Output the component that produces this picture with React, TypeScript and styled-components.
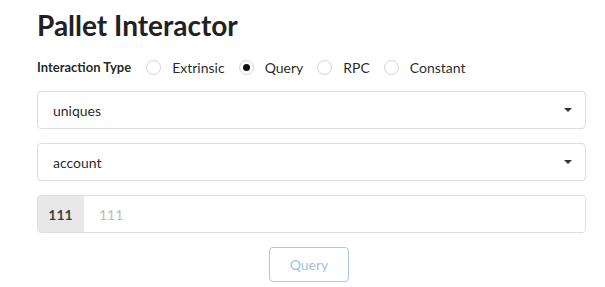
import React from "react";
import styled, { createGlobalStyle } from "styled-components";

const Global = createGlobalStyle`
  html, body { margin: 0; padding: 0; background: #fff; }
  body { font-family: Lato, "Helvetica Neue", Arial, sans-serif; font-size: 14px; color: rgba(0,0,0,.87); }
  * { box-sizing: border-box; }
`;

const Page = styled.div`
  padding: 7px 19px 0 37px;
  width: 605px;
`;

const Title = styled.h1`
  margin: 0;
  font-size: 28px;
  font-weight: 700;
  line-height: 36px;
  color: #212121;
`;

const TypeRow = styled.div`
  display: flex;
  align-items: center;
  height: 20px;
  margin-top: 14px;
`;

const FieldLabel = styled.span`
  font-size: 13px;
  font-weight: 700;
  margin-right: 15px;
`;

const RadioItem = styled.label`
  display: flex;
  align-items: center;
  font-size: 14px;
  margin-right: 14px;
`;

const RadioCircle = styled.span<{ $checked?: boolean }>`
  width: 15px;
  height: 15px;
  border-radius: 50%;
  border: 1px solid #d4d4d5;
  margin-right: 11px;
  display: flex;
  align-items: center;
  justify-content: center;
  &::after {
    content: "";
    display: ${(p) => (p.$checked ? "block" : "none")};
    width: 7px;
    height: 7px;
    border-radius: 50%;
    background: #111;
  }
`;

const Fields = styled.div`
  display: flex;
  flex-direction: column;
  gap: 14px;
  margin-top: 14px;
`;

const Dropdown = styled.div`
  height: 38px;
  border: 1px solid rgba(34,36,38,.15);
  border-radius: 4px;
  display: flex;
  align-items: center;
  justify-content: space-between;
  padding: 0 13px 0 15px;
  font-size: 14px;
`;

const Caret = styled.span`
  width: 0;
  height: 0;
  border-left: 4px solid transparent;
  border-right: 4px solid transparent;
  border-top: 4px solid #333;
`;

const InputGroup = styled.div`
  display: flex;
  height: 38px;
  border: 1px solid rgba(34,36,38,.15);
  border-radius: 4px;
  overflow: hidden;
`;

const InputLabel = styled.div`
  width: 47px;
  background: #e8e8e8;
  color: rgba(0,0,0,.75);
  font-weight: 700;
  font-size: 14px;
  display: flex;
  align-items: center;
  justify-content: center;
  margin: -1px 0 -1px -1px;
`;

const TextInput = styled.input`
  flex: 1;
  border: none;
  outline: none;
  padding: 0 15px;
  font-family: inherit;
  font-size: 14px;
  &::placeholder { color: #bdbdbd; }
`;

const ButtonRow = styled.div`
  display: flex;
  justify-content: center;
  margin-top: 14px;
  padding-right: 5px;
`;

const Button = styled.button`
  width: 80px;
  height: 35px;
  border: 1px solid #a9c6ee;
  border-radius: 4px;
  background: #fff;
  color: #a3bfe8;
  font-family: inherit;
  font-size: 14px;
`;

export default function App() {
  const types = ["Extrinsic", "Query", "RPC", "Constant"];
  return (
    <>
      <Global />
      <Page>
        <Title>Pallet Interactor</Title>
        <TypeRow>
          <FieldLabel>Interaction Type</FieldLabel>
          {types.map((t) => (
            <RadioItem key={t}>
              <RadioCircle $checked={t === "Query"} />
              {t}
            </RadioItem>
          ))}
        </TypeRow>
        <Fields>
          <Dropdown>
            uniques
            <Caret />
          </Dropdown>
          <Dropdown>
            account
            <Caret />
          </Dropdown>
          <InputGroup>
            <InputLabel>111</InputLabel>
            <TextInput placeholder="111" />
          </InputGroup>
        </Fields>
        <ButtonRow>
          <Button>Query</Button>
        </ButtonRow>
      </Page>
    </>
  );
}
